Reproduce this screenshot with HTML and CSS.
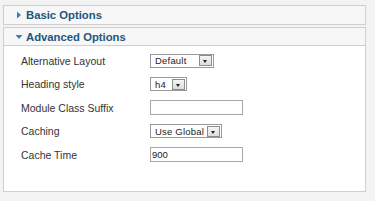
FILE: index.html
```html
<!DOCTYPE html>
<html lang="en">
<head>
    <meta charset="UTF-8">
    <meta name="viewport" content="width=device-width, initial-scale=1.0">
    <title>Module Parameters</title>
    <link rel="stylesheet" href="styles.css">
</head>
<body>
    <div class="pane-sliders">
        <!-- Collapsed panel -->
        <div class="panel">
            <h3 class="toggler">
                <svg class="arrow" width="8" height="8" viewBox="0 0 8 8"><path d="M2 0.5 L6 4 L2 7.5 Z" fill="#2f86b4"/></svg>
                <span>Basic Options</span>
            </h3>
        </div>

        <!-- Open panel -->
        <div class="panel">
            <h3 class="toggler open">
                <svg class="arrow" width="8" height="8" viewBox="0 0 8 8"><path d="M0.5 2 L7.5 2 L4 6 Z" fill="#2f86b4"/></svg>
                <span>Advanced Options</span>
            </h3>
            <div class="content">
                <div class="param-row">
                    <label class="param-label">Alternative Layout</label>
                    <span class="select sel-layout"><span class="sel-text">Default</span><span class="sel-btn"></span></span>
                </div>
                <div class="param-row">
                    <label class="param-label">Heading style</label>
                    <span class="select sel-heading"><span class="sel-text">h4</span><span class="sel-btn"></span></span>
                </div>
                <div class="param-row">
                    <label class="param-label">Module Class Suffix</label>
                    <input class="text-input" type="text" value="">
                </div>
                <div class="param-row">
                    <label class="param-label">Caching</label>
                    <span class="select sel-caching"><span class="sel-text">Use Global</span><span class="sel-btn"></span></span>
                </div>
                <div class="param-row">
                    <label class="param-label">Cache Time</label>
                    <input class="text-input" type="text" value="900">
                </div>
            </div>
        </div>
    </div>
</body>
</html>
```

FILE: styles.css
```css
body {
    margin: 0;
    padding: 5px 10px 0 3px;
    background-color: #f3f3f3;
    font-family: "Liberation Sans", Arial, sans-serif;
    color: #333;
}
.pane-sliders {
    width: 363px;
}
.panel {
    border: 1px solid #cfcfcf;
    background: #fff;
    margin-bottom: 2px;
}
.toggler {
    display: flex;
    align-items: center;
    margin: 0;
    height: 18px;
    padding-left: 11px;
    background: #f7f7f7;
    font-size: 11.3px;
    font-weight: bold;
    color: #1b5680;
}
.toggler.open {
    height: 17px;
    border-bottom: 1px solid #cfcfcf;
}
.arrow {
    margin-right: 3px;
}
.content {
    height: 145px;
    padding: 3px 0 0 17px;
    box-sizing: border-box;
}
.param-row {
    display: flex;
    align-items: center;
    height: 23.5px;
}
.param-label {
    flex: 0 0 129px;
    font-size: 10.5px;
    color: #333;
}
.select {
    display: flex;
    align-items: center;
    justify-content: space-between;
    box-sizing: border-box;
    height: 14px;
    border: 1px solid #9a9a9a;
    background: #fff;
    padding: 0 1px 0 4px;
    font-size: 9.5px;
    letter-spacing: 0.2px;
    color: #222;
}
.sel-layout {
    width: 64px;
}
.sel-heading {
    width: 37px;
}
.sel-caching {
    width: 72px;
}
.sel-btn {
    position: relative;
    box-sizing: border-box;
    width: 13px;
    height: 11px;
    border: 1px solid #8d8d8d;
    background: linear-gradient(#f6f6f6, #dcdcdc);
}
.sel-btn::after {
    content: "";
    position: absolute;
    left: 3px;
    top: 4px;
    border-left: 2.5px solid transparent;
    border-right: 2.5px solid transparent;
    border-top: 3px solid #222;
}
.text-input {
    box-sizing: border-box;
    width: 93px;
    height: 15px;
    margin: 0;
    padding: 0 1px;
    border: 1px solid #a8a8a8;
    background: #fff;
    font-family: "Liberation Sans", Arial, sans-serif;
    font-size: 9.5px;
    color: #222;
}
```
